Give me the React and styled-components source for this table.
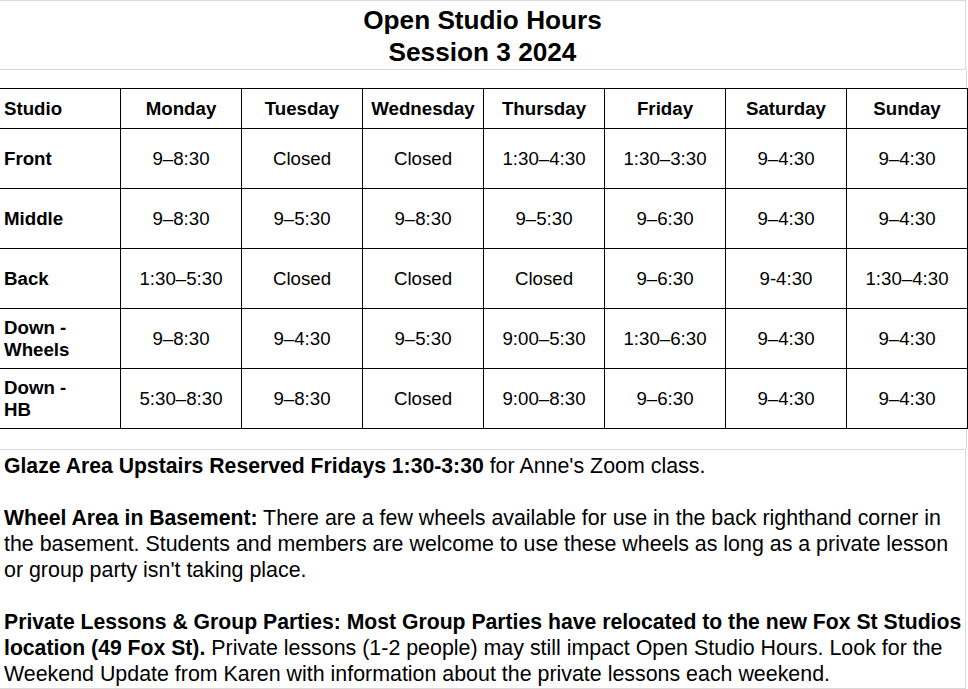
import React from 'react';
import styled, { createGlobalStyle } from 'styled-components';

const GlobalStyle = createGlobalStyle`
  body {
    margin: 0;
    background: #ffffff;
    font-family: "Liberation Sans", Arial, sans-serif;
    color: #000000;
  }
`;

const Sheet = styled.div`
  width: 967px;
  display: flex;
  flex-direction: column;
`;

const TitleBlock = styled.header`
  width: 966px;
  height: 70px;
  box-sizing: border-box;
  border-top: 1px solid #d9d9d9;
  border-bottom: 1px solid #d9d9d9;
  border-right: 1px solid #d9d9d9;
  padding-top: 1px;
  display: flex;
  flex-direction: column;
  align-items: center;
  justify-content: center;
`;

const TitleLine = styled.h1`
  margin: 0;
  font-size: 26.2px;
  line-height: 32px;
  font-weight: 700;
`;

const Gap = styled.div`
  height: ${(p) => p.h}px;
  width: 966px;
  border-right: 1px solid #d9d9d9;
`;

const Table = styled.table`
  border-collapse: collapse;
  table-layout: fixed;
  width: 968px;
  margin-left: -1px;
  font-size: 18.7px;
`;

const Cell = styled.td`
  border: 1px solid #000000;
  height: ${(p) => (p.head ? 40 : 60)}px;
  padding: 0 4px;
  text-align: ${(p) => (p.left ? 'left' : 'center')};
  vertical-align: middle;
  font-weight: ${(p) => (p.bold ? 700 : 400)};
  line-height: 22px;
  box-sizing: border-box;
`;

const Notes = styled.section`
  width: 966px;
  box-sizing: border-box;
  border-top: 1px solid #d9d9d9;
  border-bottom: 1px solid #d9d9d9;
  border-right: 1px solid #d9d9d9;
  padding: 3px 2px 1px 4px;
  font-size: 21.4px;
  line-height: 26px;

  b {
    font-size: 21.2px;
  }
`;

const Para = styled.p`
  margin: 0 0 26px;
  white-space: nowrap;

  &:last-child {
    margin-bottom: 0;
  }
`;

const days = ['Monday', 'Tuesday', 'Wednesday', 'Thursday', 'Friday', 'Saturday', 'Sunday'];

const rows = [
  { studio: ['Front'], hours: ['9–8:30', 'Closed', 'Closed', '1:30–4:30', '1:30–3:30', '9–4:30', '9–4:30'] },
  { studio: ['Middle'], hours: ['9–8:30', '9–5:30', '9–8:30', '9–5:30', '9–6:30', '9–4:30', '9–4:30'] },
  { studio: ['Back'], hours: ['1:30–5:30', 'Closed', 'Closed', 'Closed', '9–6:30', '9-4:30', '1:30–4:30'] },
  { studio: ['Down -', 'Wheels'], hours: ['9–8:30', '9–4:30', '9–5:30', '9:00–5:30', '1:30–6:30', '9–4:30', '9–4:30'] },
  { studio: ['Down -', 'HB'], hours: ['5:30–8:30', '9–8:30', 'Closed', '9:00–8:30', '9–6:30', '9–4:30', '9–4:30'] },
];

const App = () => {
  return (
    <Sheet>
      <GlobalStyle />
      <TitleBlock>
        <TitleLine>Open Studio Hours</TitleLine>
        <TitleLine as="div">Session 3 2024</TitleLine>
      </TitleBlock>
      <Gap h={18} />
      <Table>
        <colgroup>
          {['Studio', ...days].map((d) => (
            <col key={d} style={{ width: 121 }} />
          ))}
        </colgroup>
        <thead>
          <tr>
            <Cell as="th" head left bold>Studio</Cell>
            {days.map((d) => (
              <Cell as="th" head bold key={d}>{d}</Cell>
            ))}
          </tr>
        </thead>
        <tbody>
          {rows.map((r) => (
            <tr key={r.studio.join(' ')}>
              <Cell left bold>
                {r.studio.map((s, i) => (
                  <React.Fragment key={s}>
                    {i > 0 && <br />}
                    {s}
                  </React.Fragment>
                ))}
              </Cell>
              {r.hours.map((h, i) => (
                <Cell key={i}>{h}</Cell>
              ))}
            </tr>
          ))}
        </tbody>
      </Table>
      <Gap h={20} />
      <Notes>
        <Para>
          <b>Glaze Area Upstairs Reserved Fridays 1:30-3:30</b> for Anne's Zoom class.
        </Para>
        <Para>
          <b>Wheel Area in Basement:</b> There are a few wheels available for use in the back righthand corner in
          <br />
          the basement. Students and members are welcome to use these wheels as long as a private lesson
          <br />
          or group party isn't taking place.
        </Para>
        <Para>
          <b>Private Lessons &amp; Group Parties: Most Group Parties have relocated to the new Fox St Studios</b>
          <br />
          <b>location (49 Fox St).</b> Private lessons (1-2 people) may still impact Open Studio Hours. Look for the
          <br />
          Weekend Update from Karen with information about the private lessons each weekend.
        </Para>
      </Notes>
    </Sheet>
  );
};

export default App;
